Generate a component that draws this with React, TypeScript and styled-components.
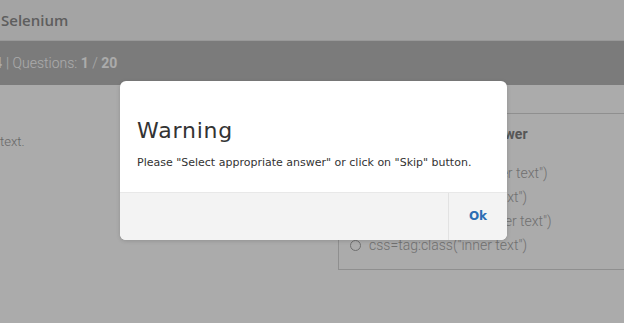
import React from "react"
import styled, {createGlobalStyle} from "styled-components"

const GlobalStyle = createGlobalStyle`
  html, body {
    margin: 0;
    padding: 0;
    width: 624px;
    height: 323px;
    overflow: hidden;
    background: #ffffff;
  }
`

const Page = styled.div`
  position: relative;
  width: 624px;
  height: 323px;
  overflow: hidden;
  font-family: Roboto, "Liberation Sans", sans-serif;
  background: #ffffff;
`

const TopBar = styled.div`
  height: 40px;
  background: #f5f5f5;
  border-bottom: 1px solid #e4e4e4;
  display: flex;
  align-items: center;
  padding-left: 1px;
  font-family: "Open Sans", sans-serif;
  font-weight: 600;
  font-size: 15px;
  color: #8c8c8c;
`

const QuestionBar = styled.div`
  height: 44px;
  background: #b8b8b8;
  display: flex;
  align-items: center;
  font-weight: 300;
  font-size: 14px;
  color: #ffffff;
  white-space: nowrap;
  overflow: hidden;
`

const Timer = styled.b`
  font-weight: 700;
  margin-left: -6px;
  margin-right: 4px;
`

const Strong = styled.b`
  font-weight: 700;
`

const Content = styled.div`
  display: grid;
  grid-template-columns: 338px 1fr;
  padding-top: 28px;
`

const QuestionText = styled.div`
  padding-top: 21px;
  font-weight: 300;
  font-size: 13px;
  color: #9a9a9a;
`

const AnswerPanel = styled.div`
  border: 1px solid #d6d6d6;
  border-right: none;
  height: 157px;
  box-sizing: border-box;
  padding: 12px 0 0 11px;
`

const AnswerTitle = styled.div`
  font-weight: 700;
  font-size: 14px;
  color: #808080;
  margin-bottom: 23px;
  padding-left: 9px;
`

const OptionList = styled.div`
  display: flex;
  flex-direction: column;
  gap: 8px;
`

const Option = styled.label`
  display: flex;
  align-items: center;
  gap: 8px;
  height: 16px;
  font-weight: 300;
  font-size: 14px;
  color: #a8a8a8;
`

const Radio = styled.span`
  width: 9px;
  height: 9px;
  border: 1px solid #a6a6a6;
  border-radius: 50%;
  flex-shrink: 0;
`

const Overlay = styled.div`
  position: absolute;
  inset: 0;
  background: rgba(0, 0, 0, 0.33);
`

const Modal = styled.div`
  position: absolute;
  left: 120px;
  top: 81px;
  width: 387px;
  height: 159px;
  background: #ffffff;
  border-radius: 6px;
  overflow: hidden;
  display: flex;
  flex-direction: column;
  font-family: "DejaVu Sans", Verdana, sans-serif;
  box-shadow: 0 1px 4px rgba(0, 0, 0, 0.15);
`

const ModalBody = styled.div`
  flex: 1;
  padding: 38px 0 0 17px;
`

const ModalTitle = styled.div`
  font-size: 22px;
  letter-spacing: 0.8px;
  color: #333333;
  line-height: 24px;
`

const ModalText = styled.div`
  margin-top: 13px;
  font-size: 11px;
  color: #333333;
`

const ModalFooter = styled.div`
  height: 47px;
  background: #f3f3f3;
  border-top: 1px solid #e8e8e8;
  display: flex;
  justify-content: flex-end;
`

const OkButton = styled.button`
  width: 59px;
  border: none;
  border-left: 1px solid #e2e2e2;
  background: transparent;
  font-family: "DejaVu Sans", Verdana, sans-serif;
  font-weight: 700;
  font-size: 12px;
  color: #2c6db3;
  cursor: pointer;
  padding: 0 0 2px 0;
`

const options = [
  'css=tag:contains("inner text")',
  'css=tag:value("inner text")',
  'css=tag:innerText("inner text")',
  'css=tag:class("inner text")',
]

export default function App() {
  return (
    <>
      <GlobalStyle />
      <Page>
        <TopBar>Selenium</TopBar>
        <QuestionBar>
          <Timer>4</Timer>| Questions:&nbsp;<Strong>1</Strong>&nbsp;/&nbsp;
          <Strong>20</Strong>
        </QuestionBar>
        <Content>
          <QuestionText>text.</QuestionText>
          <AnswerPanel>
            <AnswerTitle>Choose the correct answer</AnswerTitle>
            <OptionList>
              {options.map((o) => (
                <Option key={o}>
                  <Radio />
                  {o}
                </Option>
              ))}
            </OptionList>
          </AnswerPanel>
        </Content>
        <Overlay />
        <Modal>
          <ModalBody>
            <ModalTitle>Warning</ModalTitle>
            <ModalText>
              Please "Select appropriate answer" or click on "Skip" button.
            </ModalText>
          </ModalBody>
          <ModalFooter>
            <OkButton>Ok</OkButton>
          </ModalFooter>
        </Modal>
      </Page>
    </>
  )
}
